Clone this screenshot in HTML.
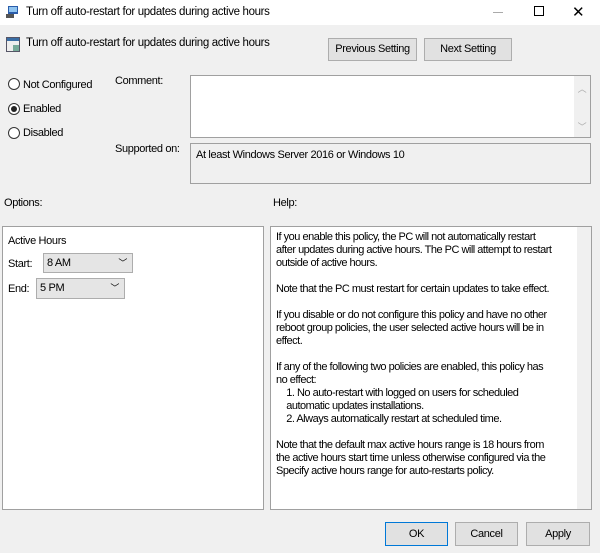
<!DOCTYPE html><html><head><style>
*{margin:0;padding:0;box-sizing:border-box}
body{width:600px;height:556px;background:#f0f0f0;font-family:"Liberation Sans",sans-serif;font-size:11px;letter-spacing:-0.35px;color:#000;position:relative;overflow:hidden}
.a{position:absolute;white-space:nowrap}
.btn{position:absolute;background:#e1e1e1;border:1px solid #adadad;text-align:center;line-height:21px;font-size:11px}
.rad{position:absolute;width:12px;height:12px;border:1px solid #333;border-radius:50%;background:#fff}
.box{position:absolute;border:1px solid #a0a0a0;background:#fff}
.sb{position:absolute;right:0;top:0;bottom:0;width:16px;background:#f0f0f0;color:#aaa;font-size:9px;text-align:center}
.cb{position:absolute;background:#e5e5e5;border:1px solid #adadad;padding-left:3px;line-height:18px}
</style></head><body>
<div class="a" style="left:0;top:0;width:600px;height:25px;background:#fff"></div>
<svg class="a" style="left:6px;top:5px" width="14" height="14"><rect x="2" y="1" width="10" height="8" fill="#2a5caa"/><rect x="3" y="2" width="8" height="5" fill="#8fc4f0"/><rect x="0" y="9" width="8" height="4" fill="#555"/></svg>
<div class="a" style="left:26px;top:6px;font-size:11.5px">Turn off auto-restart for updates during active hours</div>
<div class="a" style="left:493px;top:12px;width:10px;height:1px;background:#aaa"></div>
<div class="a" style="left:534px;top:6px;width:10px;height:10px;border:1px solid #000"></div>
<div class="a" style="left:572px;top:3px;font-size:15px">✕</div>
<svg class="a" style="left:6px;top:37px" width="14" height="15"><rect x="0.5" y="0.5" width="13" height="14" fill="#eee" stroke="#556"/><rect x="1" y="1" width="12" height="3" fill="#3a6ea5"/><rect x="7" y="8" width="6" height="6" fill="#7a9"/></svg>
<div class="a" style="left:26px;top:37px;font-size:11.5px">Turn off auto-restart for updates during active hours</div>
<div class="btn" style="left:328px;top:38px;width:89px;height:23px">Previous Setting</div>
<div class="btn" style="left:424px;top:38px;width:88px;height:23px">Next Setting</div>
<div class="rad" style="left:8px;top:78px"></div><div class="a" style="left:23px;top:79px">Not Configured</div>
<div class="rad" style="left:8px;top:103px"></div><div class="a" style="left:11px;top:106px;width:6px;height:6px;border-radius:50%;background:#222"></div><div class="a" style="left:23px;top:103px">Enabled</div>
<div class="rad" style="left:8px;top:127px"></div><div class="a" style="left:23px;top:127px">Disabled</div>
<div class="a" style="left:115px;top:75px">Comment:</div>
<div class="box" style="left:190px;top:75px;width:401px;height:63px"><div class="sb"><div style="margin-top:6px">︿</div><div style="position:absolute;bottom:4px;width:16px">﹀</div></div></div>
<div class="a" style="left:115px;top:143px">Supported on:</div>
<div class="box" style="left:190px;top:143px;width:401px;height:41px;background:#f0f0f0;padding:5px 0 0 5px">At least Windows Server 2016 or Windows 10<div class="sb" style="background:#f0f0f0"></div></div>
<div class="a" style="left:4px;top:197px">Options:</div>
<div class="a" style="left:273px;top:197px">Help:</div>
<div class="box" style="left:2px;top:226px;width:262px;height:284px"></div>
<div class="a" style="left:8px;top:235px">Active Hours</div>
<div class="a" style="left:8px;top:258px">Start:</div>
<div class="cb" style="left:43px;top:253px;width:90px;height:20px">8 AM<span style="position:absolute;right:5px;top:0;font-size:9px">﹀</span></div>
<div class="a" style="left:8px;top:283px">End:</div>
<div class="cb" style="left:36px;top:278px;width:89px;height:21px">5 PM<span style="position:absolute;right:5px;top:0;font-size:9px">﹀</span></div>
<div class="box" style="left:270px;top:226px;width:322px;height:284px;padding:4px 0 0 5px;line-height:13px;white-space:pre;letter-spacing:-0.5px;overflow:hidden">If you enable this policy, the PC will not automatically restart
after updates during active hours. The PC will attempt to restart
outside of active hours.

Note that the PC must restart for certain updates to take effect.

If you disable or do not configure this policy and have no other
reboot group policies, the user selected active hours will be in
effect.

If any of the following two policies are enabled, this policy has
no effect:
    1. No auto-restart with logged on users for scheduled
    automatic updates installations.
    2. Always automatically restart at scheduled time.

Note that the default max active hours range is 18 hours from
the active hours start time unless otherwise configured via the
Specify active hours range for auto-restarts policy.<div class="sb" style="width:14px"></div></div>
<div class="btn" style="left:385px;top:522px;width:63px;height:24px;border:1px solid #0078d7;line-height:22px">OK</div>
<div class="btn" style="left:455px;top:522px;width:63px;height:24px;line-height:22px">Cancel</div>
<div class="btn" style="left:526px;top:522px;width:64px;height:24px;line-height:22px">Apply</div>
<div class="a" style="left:0;top:553px;width:600px;height:3px;background:#fff"></div>
</body></html>
